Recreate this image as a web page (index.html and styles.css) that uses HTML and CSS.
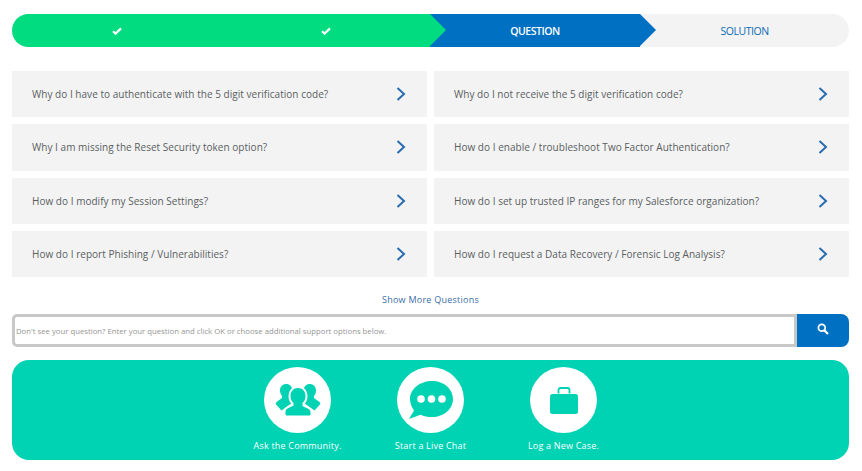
FILE: index.html
```html
<!DOCTYPE html>
<html lang="en">
    <head>
        <meta charset="UTF-8">
        <title>Support</title>
        <link rel="stylesheet" href="styles.css">
    </head>
    <body>
        <div class="steps">
            <div class="step step-done">
                <svg class="check" viewBox="0 0 10 8"><path d="M1 4.200 3.600 6.600 9 1.400" fill="none" stroke="#fff" stroke-width="2.200"/></svg>
            </div>
            <div class="step step-done step-done-last">
                <svg class="check" viewBox="0 0 10 8"><path d="M1 4.200 3.600 6.600 9 1.400" fill="none" stroke="#fff" stroke-width="2.200"/></svg>
            </div>
            <div class="step step-active">QUESTION</div>
            <div class="step step-next">SOLUTION</div>
        </div>

        <div class="questions">
            <a class="question"><span>Why do I have to authenticate with the 5 digit verification code?</span><svg class="arrow" viewBox="0 0 10 14"><path d="M1.500 1 8 7 1.500 13" fill="none" stroke="#2a6cb0" stroke-width="2"/></svg></a>
            <a class="question"><span>Why do I not receive the 5 digit verification code?</span><svg class="arrow" viewBox="0 0 10 14"><path d="M1.500 1 8 7 1.500 13" fill="none" stroke="#2a6cb0" stroke-width="2"/></svg></a>
            <a class="question"><span>Why I am missing the Reset Security token option?</span><svg class="arrow" viewBox="0 0 10 14"><path d="M1.500 1 8 7 1.500 13" fill="none" stroke="#2a6cb0" stroke-width="2"/></svg></a>
            <a class="question"><span>How do I enable / troubleshoot Two Factor Authentication?</span><svg class="arrow" viewBox="0 0 10 14"><path d="M1.500 1 8 7 1.500 13" fill="none" stroke="#2a6cb0" stroke-width="2"/></svg></a>
            <a class="question"><span>How do I modify my Session Settings?</span><svg class="arrow" viewBox="0 0 10 14"><path d="M1.500 1 8 7 1.500 13" fill="none" stroke="#2a6cb0" stroke-width="2"/></svg></a>
            <a class="question"><span>How do I set up trusted IP ranges for my Salesforce organization?</span><svg class="arrow" viewBox="0 0 10 14"><path d="M1.500 1 8 7 1.500 13" fill="none" stroke="#2a6cb0" stroke-width="2"/></svg></a>
            <a class="question"><span>How do I report Phishing / Vulnerabilities?</span><svg class="arrow" viewBox="0 0 10 14"><path d="M1.500 1 8 7 1.500 13" fill="none" stroke="#2a6cb0" stroke-width="2"/></svg></a>
            <a class="question"><span>How do I request a Data Recovery / Forensic Log Analysis?</span><svg class="arrow" viewBox="0 0 10 14"><path d="M1.500 1 8 7 1.500 13" fill="none" stroke="#2a6cb0" stroke-width="2"/></svg></a>
        </div>

        <a class="more">Show More Questions</a>

        <div class="search">
            <div class="search-input">Don't see your question? Enter your question and click OK or choose additional support options below.</div>
            <button class="search-button">
                <svg viewBox="0 0 12 12" width="12" height="12"><circle cx="4.800" cy="4.800" r="3.400" fill="none" stroke="#fff" stroke-width="1.700"/><path d="M7.400 7.400 11 11" stroke="#fff" stroke-width="2.200"/></svg>
            </button>
        </div>

        <div class="support">
            <div class="option">
                <div class="circle">
                    <svg viewBox="0 0 50 46" width="50" height="46">
                        <path d="M13 7c-3.800 0-6 3-6 6.500 0 2.500 1 4.300 2 5.500v2L3.500 25c-1 1-1 2 0 3l5 5.500L19 26V12c0-3-3-5-6-5z" fill="#00d2b4"/>
                        <path d="M37 7c3.800 0 6 3 6 6.500 0 2.500-1 4.300-2 5.500v2l5.500 4c1 1 1 2 0 3l-5 5.500L31 26V12c0-3 3-5 6-5z" fill="#00d2b4"/>
                        <path class="person" d="M25 11c-4.500 0-7.500 3.500-7.500 8 0 3 1.200 5.500 3 7v2.500l-6 3c-1.500.8-2 2-2 3.500V37c0 1 .5 1.500 1.500 1.500h22c1 0 1.500-.5 1.500-1.500v-1.500c0-1.500-.5-2.700-2-3.500l-6-3V26c1.800-1.500 3-4 3-7 0-4.500-3-8-7.500-8z"/>
                    </svg>
                </div>
                <span class="option-label">Ask the Community.</span>
            </div>
            <div class="option">
                <div class="circle">
                    <svg viewBox="0 0 46 40" width="46" height="40">
                        <path d="M24 1C12 1 2 9 2 19c0 4.500 1.800 8.500 4 11.500L1 39l11.500-4.300C15.800 36.300 19.500 37 24 37c12 0 21-8 21-18S36 1 24 1z" fill="#00d2b4"/>
                        <circle cx="13" cy="19" r="3.800" fill="#fff"/>
                        <circle cx="23.500" cy="19" r="3.800" fill="#fff"/>
                        <circle cx="34" cy="19" r="3.800" fill="#fff"/>
                    </svg>
                </div>
                <span class="option-label">Start a Live Chat</span>
            </div>
            <div class="option">
                <div class="circle">
                    <svg viewBox="0 0 28 27" width="28" height="27">
                        <path d="M8.500 6.500V3c0-1.200.7-2 2-2h7c1.300 0 2 .8 2 2v3.500" fill="none" stroke="#00d2b4" stroke-width="1.800"/>
                        <rect x="0" y="7" width="28" height="20" rx="2.500" fill="#00d2b4"/>
                    </svg>
                </div>
                <span class="option-label">Log a New Case.</span>
            </div>
        </div>
    </body>
</html>
```

FILE: styles.css
```css
body {
    font-family: "Open Sans", sans-serif;
    margin: 0;
    padding: 14px 13px 0 12px;
    background-color: #fff;
    color: #5a5e62;
}

/* progress bar */

.steps {
    display: flex;
    height: 33px;
    border-radius: 17px;
    overflow: hidden;
    background-color: #f3f3f3;
}

.step {
    position: relative;
    display: flex;
    align-items: center;
    justify-content: center;
    box-sizing: border-box;
    font-size: 10.500px;
    font-weight: 600;
    letter-spacing: -0.45px;
}

.step-done {
    width: 209px;
    background-color: #00dc7f;
}

.step-done-last::after,
.step-active::after {
    content: "";
    position: absolute;
    top: 0;
    left: 100%;
    z-index: 1;
    border-top: 16.500px solid transparent;
    border-bottom: 16.500px solid transparent;
    border-left: 16px solid #00dc7f;
}

.step-active {
    width: 210px;
    background-color: #0070c2;
    color: #fff;
}

.step-active::after {
    border-left-color: #0070c2;
}

.step-next {
    flex: 1;
    color: #0a6cb4;
    font-weight: 400;
}

.check {
    width: 10px;
    height: 8px;
}

/* questions */

.questions {
    display: grid;
    grid-template-columns: 415px 415px;
    grid-auto-rows: 46.250px;
    column-gap: 7px;
    row-gap: 7px;
    margin-top: 24px;
}

.question {
    display: flex;
    align-items: center;
    justify-content: space-between;
    padding: 0 21px 0 20px;
    background-color: #f3f3f3;
    font-size: 10px;
    letter-spacing: 0.03px;
}

.arrow {
    width: 10px;
    height: 14px;
}

.more {
    display: block;
    margin-top: 17px;
    text-align: center;
    font-size: 9px;
    letter-spacing: 0.25px;
    line-height: 12px;
    color: #3a6ea8;
}

/* search */

.search {
    display: flex;
    height: 33px;
    margin-top: 8px;
}

.search-input {
    flex: 1;
    display: flex;
    align-items: center;
    padding-left: 1px;
    border: 3px solid #c8c8c8;
    border-radius: 5px 0 0 5px;
    font-size: 7.750px;
    color: #969696;
}

.search-button {
    width: 52px;
    padding: 0;
    border: none;
    border-radius: 0 8px 8px 0;
    background-color: #0070c2;
}

/* support options */

.support {
    display: flex;
    justify-content: center;
    gap: 66px;
    height: 100px;
    margin-top: 13px;
    border-radius: 17px;
    background-color: #00d2b4;
}

.option {
    display: flex;
    flex-direction: column;
    align-items: center;
    width: 67px;
    padding-top: 7px;
}

.circle {
    display: flex;
    align-items: center;
    justify-content: center;
    flex: none;
    width: 67px;
    height: 66px;
    border-radius: 50%;
    background-color: #fff;
}

.person {
    fill: #00d2b4;
    stroke: #fff;
    stroke-width: 4px;
    paint-order: stroke;
}

.option-label {
    margin-top: 6px;
    font-size: 9px;
    letter-spacing: 0.2px;
    white-space: nowrap;
    color: #fff;
}
```
